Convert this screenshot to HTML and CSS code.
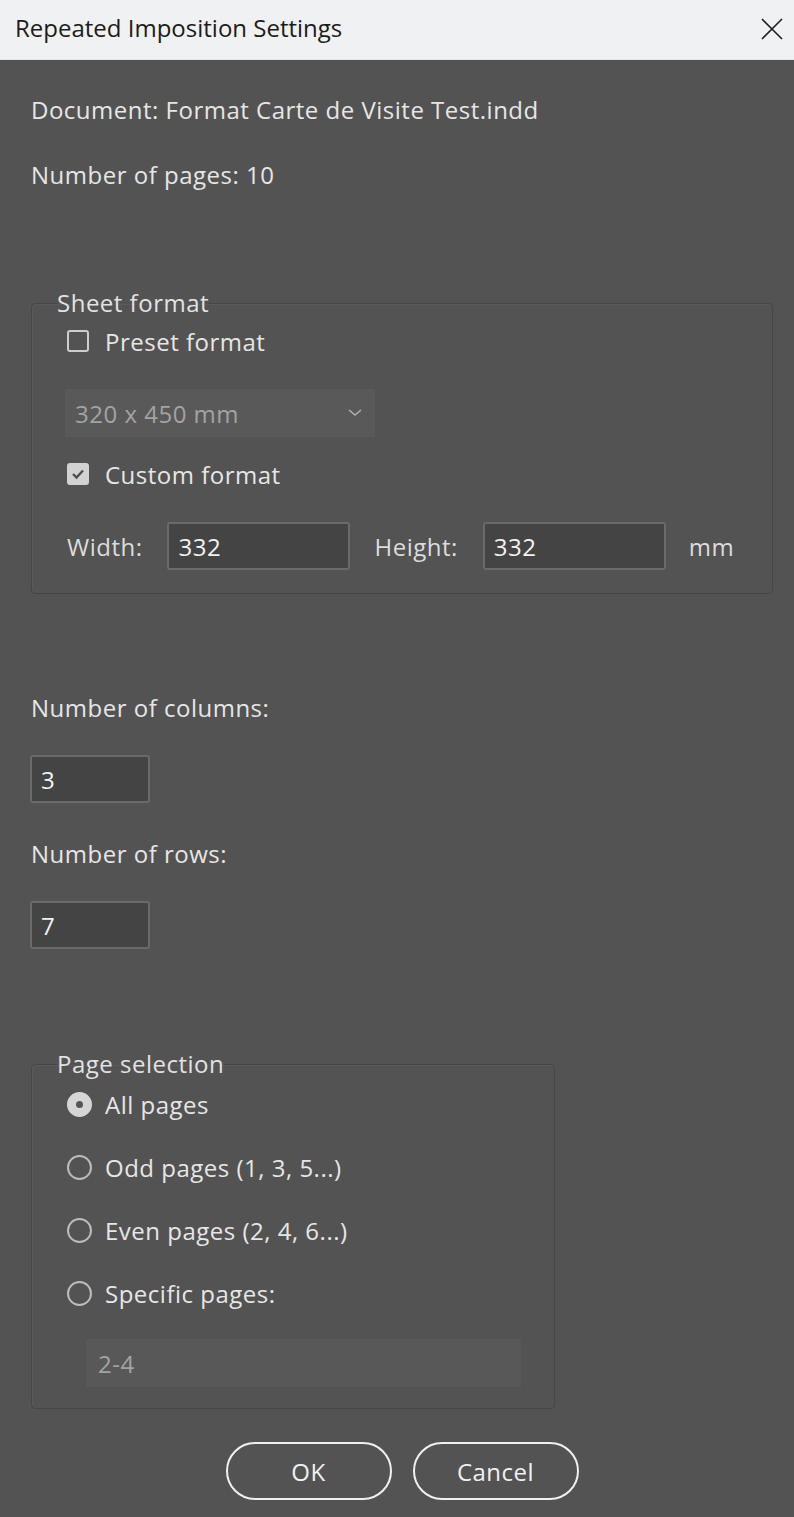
FILE: index.html
```html
<!DOCTYPE html>
<html>
<head>
    <title>Repeated Imposition Settings</title>
    <link rel="stylesheet" href="styles.css">
</head>
<body>
    <div class="dialog">
        <div class="titlebar">
            <span class="title">Repeated Imposition Settings</span>
            <button type="button" class="close" aria-label="Close">
                <svg width="24" height="24" viewBox="0 0 24 24">
                    <path d="M2 2 L22 22 M22 2 L2 22" stroke="#1f1f1f" stroke-width="1.6" fill="none"/>
                </svg>
            </button>
        </div>

        <div class="content">
            <p class="info">Document: Format Carte de Visite Test.indd</p>
            <p class="info pages">Number of pages: 10</p>

            <fieldset class="group sheet">
                <legend>Sheet format</legend>
                <div class="group-body">
                    <label class="option">
                        <span class="box"></span>
                        Preset format
                    </label>
                    <div class="select">
                        <span>320 x 450 mm</span>
                        <svg width="16" height="10" viewBox="0 0 16 10">
                            <path d="M2 2 L8 7 L14 2" stroke="#b0b0b0" stroke-width="1.6" fill="none"/>
                        </svg>
                    </div>
                    <label class="option custom">
                        <span class="box checked">
                            <svg width="16" height="16" viewBox="0 0 16 16">
                                <path d="M3 8 L6.5 11.5 L13 4.5" stroke="#4e4e4e" stroke-width="2.4" fill="none"/>
                            </svg>
                        </span>
                        Custom format
                    </label>
                    <div class="size-row">
                        <span>Width:</span>
                        <input type="text" class="field size" value="332">
                        <span class="height-label">Height:</span>
                        <input type="text" class="field size" value="332">
                        <span class="unit">mm</span>
                    </div>
                </div>
            </fieldset>

            <p class="label columns">Number of columns:</p>
            <input type="text" class="field small" value="3">
            <p class="label rows">Number of rows:</p>
            <input type="text" class="field small" value="7">

            <fieldset class="group selection">
                <legend>Page selection</legend>
                <div class="group-body">
                    <label class="option radio-row first"><span class="radio on"></span>All pages</label>
                    <label class="option radio-row"><span class="radio"></span>Odd pages (1, 3, 5...)</label>
                    <label class="option radio-row"><span class="radio"></span>Even pages (2, 4, 6...)</label>
                    <label class="option radio-row"><span class="radio"></span>Specific pages:</label>
                    <div class="pages-field">2-4</div>
                </div>
            </fieldset>

            <div class="buttons">
                <button type="button" class="btn">OK</button>
                <button type="button" class="btn">Cancel</button>
            </div>
        </div>
    </div>
</body>
</html>
```

FILE: styles.css
```css
body {
    margin: 0;
    background-color: #535353;
    font-family: "Open Sans", "Noto Sans", sans-serif;
    color: #e6e6e6;
    letter-spacing: 0.5px;
}

.dialog {
    width: 794px;
    height: 1517px;
    background-color: #535353;
}

.titlebar {
    height: 60px;
    background-color: #f0f1f3;
    border-bottom: 1px solid #e2e3e5;
    box-sizing: border-box;
    display: flex;
    align-items: center;
    justify-content: space-between;
    padding: 0 10px 4px 15px;
    letter-spacing: 0;
}

.title {
    font-size: 24px;
    color: #1c1c1c;
}

.close {
    background: none;
    border: none;
    padding: 0;
    width: 24px;
    height: 24px;
    margin-top: 2px;
}

.content {
    padding: 0 21px 0 31px;
}

.info,
.label {
    margin: 0;
    font-size: 24px;
    line-height: 32px;
}

.info {
    padding-top: 34px;
}

.info.pages {
    padding-top: 33px;
}

/* framed groups */
.group {
    margin: 0;
    border: 1px solid #464646;
    border-radius: 4px;
    box-shadow: inset 1px 1px 0 #5a5a5a;
    padding: 6px 20px 23px 25px;
}

.group legend {
    padding: 0;
    font-size: 24px;
    line-height: 32px;
    color: #e2e2e2;
}

.group-body {
    padding-left: 10px;
}

.sheet {
    margin-top: 96px;
}

.selection {
    width: 524px;
    box-sizing: border-box;
    margin-top: 99px;
    padding-bottom: 21px;
}

.option {
    display: flex;
    align-items: center;
    height: 32px;
    font-size: 24px;
}

.box {
    width: 18px;
    height: 18px;
    border: 2px solid #cdcdcd;
    border-radius: 3px;
    margin-right: 16px;
    display: flex;
    align-items: center;
    justify-content: center;
}

.box.checked {
    background-color: #d2d2d2;
    border-color: #d2d2d2;
}

.select {
    margin: 32px 0 0 -2px;
    width: 310px;
    height: 48px;
    background-color: #595959;
    box-sizing: border-box;
    padding: 0 12px 0 10px;
    display: flex;
    align-items: center;
    justify-content: space-between;
    font-size: 24px;
    color: #a3a3a3;
}

.custom {
    margin-top: 21px;
}

.size-row {
    margin-top: 32px;
    display: flex;
    align-items: center;
    font-size: 24px;
    color: #dcdcdc;
}

.field {
    height: 48px;
    box-sizing: border-box;
    background-color: #444444;
    border: 2px solid #6a6a6a;
    border-radius: 3px;
    color: #f2f2f2;
    font-family: inherit;
    font-size: 24px;
    letter-spacing: 0.5px;
    padding: 0 9px;
    outline: none;
}

.size {
    width: 183px;
    margin-left: 25px;
}

.height-label {
    margin-left: 24px;
}

.unit {
    margin-left: 23px;
}

.label.columns {
    margin-top: 98px;
}

.label.rows {
    margin-top: 35px;
}

.small {
    display: block;
    width: 120px;
    margin: 31px 0 0 -1px;
}

/* radio buttons */
.radio-row {
    margin-top: 31px;
}

.radio-row.first {
    margin-top: 2px;
}

.radio {
    width: 21px;
    height: 21px;
    border: 2px solid #bcbcbc;
    border-radius: 50%;
    margin-right: 13px;
    display: flex;
    align-items: center;
    justify-content: center;
}

.radio.on {
    background-color: #d6d6d6;
    border-color: #d6d6d6;
}

.radio.on::after {
    content: "";
    width: 7px;
    height: 7px;
    border-radius: 50%;
    background-color: #555555;
}

.pages-field {
    margin: 30px 0 0 19px;
    width: 435px;
    height: 48px;
    box-sizing: border-box;
    background-color: #585858;
    padding: 0 12px;
    display: flex;
    align-items: center;
    font-size: 24px;
    color: #a3a3a3;
}

.buttons {
    margin-top: 33px;
    display: flex;
    justify-content: center;
    gap: 21px;
}

.btn {
    width: 166px;
    height: 58px;
    background: none;
    border: 2px solid #f0f0f0;
    border-radius: 29px;
    color: #f0f0f0;
    font-family: inherit;
    font-size: 24px;
    letter-spacing: 0.5px;
}
```
